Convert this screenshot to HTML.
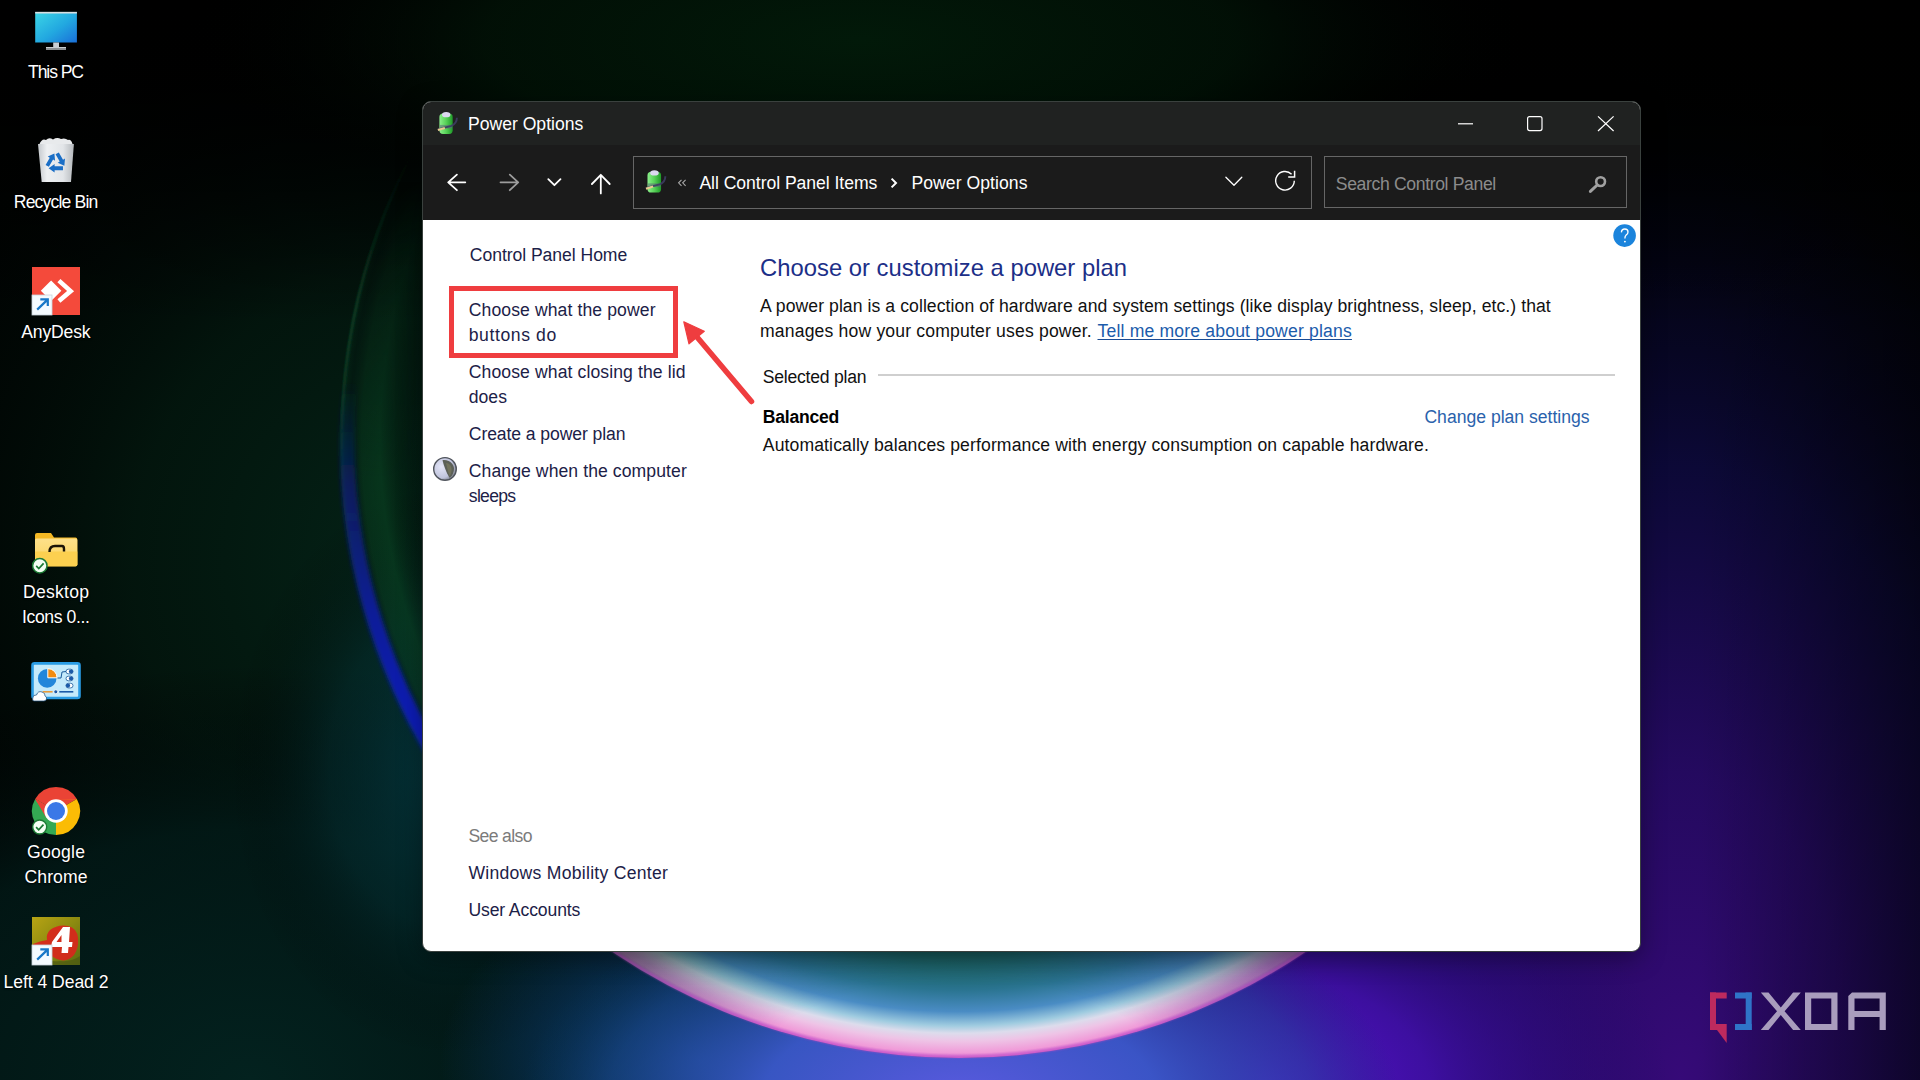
<!DOCTYPE html>
<html><head><meta charset="utf-8">
<style>
*{margin:0;padding:0;box-sizing:border-box}
html,body{width:1920px;height:1080px;overflow:hidden;background:#000}
body{position:relative;font-family:"Liberation Sans",sans-serif}
.abs{position:absolute}
.t{position:absolute;white-space:nowrap}
svg{position:absolute;overflow:visible}
</style></head><body>
<svg width="1920" height="1080" style="left:0;top:0" viewBox="0 0 1920 1080">
<defs>
 <linearGradient id="gTopBlack" x1="0" y1="0" x2="0" y2="1">
  <stop offset="0" stop-color="#000" stop-opacity="1"/>
  <stop offset="0.08" stop-color="#000" stop-opacity="0.9"/>
  <stop offset="0.3" stop-color="#000" stop-opacity="0"/>
 </linearGradient>
 <radialGradient id="gGreen" gradientUnits="userSpaceOnUse" cx="440" cy="560" r="620" gradientTransform="translate(440 560) scale(1 0.95) translate(-440 -560)">
  <stop offset="0" stop-color="#042418" stop-opacity="1"/>
  <stop offset="0.5" stop-color="#03180f" stop-opacity="0.85"/>
  <stop offset="1" stop-color="#010806" stop-opacity="0"/>
 </radialGradient>
 <radialGradient id="gTeal" gradientUnits="userSpaceOnUse" cx="450" cy="770" r="260" gradientTransform="translate(450 770) scale(0.85 1.1) translate(-450 -770)">
  <stop offset="0" stop-color="#05404c" stop-opacity="0.75"/>
  <stop offset="0.55" stop-color="#043036" stop-opacity="0.45"/>
  <stop offset="1" stop-color="#000" stop-opacity="0"/>
 </radialGradient>
 <radialGradient id="gRight" gradientUnits="userSpaceOnUse" cx="1680" cy="1080" r="820" gradientTransform="translate(1680 1080) scale(0.7 1.25) translate(-1680 -1080)">
  <stop offset="0" stop-color="#360a78" stop-opacity="1"/>
  <stop offset="0.3" stop-color="#260a64" stop-opacity="0.95"/>
  <stop offset="0.6" stop-color="#0e0a40" stop-opacity="0.85"/>
  <stop offset="0.85" stop-color="#040418" stop-opacity="0.6"/>
  <stop offset="1" stop-color="#000" stop-opacity="0"/>
 </radialGradient>
 <linearGradient id="gRightDark" gradientUnits="userSpaceOnUse" x1="1700" y1="0" x2="1920" y2="0">
  <stop offset="0" stop-color="#000" stop-opacity="0"/>
  <stop offset="1" stop-color="#000" stop-opacity="0.45"/>
 </linearGradient>
 <radialGradient id="gPurple" gradientUnits="userSpaceOnUse" cx="1270" cy="1090" r="400" gradientTransform="translate(1270 1090) scale(1 0.7) translate(-1270 -1090)">
  <stop offset="0" stop-color="#5c12d8" stop-opacity="1"/>
  <stop offset="0.4" stop-color="#4410b0" stop-opacity="0.85"/>
  <stop offset="1" stop-color="#240870" stop-opacity="0"/>
 </radialGradient>
 <radialGradient id="gBlue" gradientUnits="userSpaceOnUse" cx="960" cy="1100" r="440" gradientTransform="translate(960 1100) scale(1 0.5) translate(-960 -1100)">
  <stop offset="0" stop-color="#5a5ae0" stop-opacity="1"/>
  <stop offset="0.45" stop-color="#3a58c8" stop-opacity="0.95"/>
  <stop offset="0.8" stop-color="#1a4a90" stop-opacity="0.5"/>
  <stop offset="1" stop-color="#063a60" stop-opacity="0"/>
 </radialGradient>
 <radialGradient id="gBlueL" gradientUnits="userSpaceOnUse" cx="700" cy="1060" r="260" gradientTransform="translate(700 1060) scale(1 0.7) translate(-700 -1060)">
  <stop offset="0" stop-color="#1a4a9a" stop-opacity="0.8"/>
  <stop offset="0.6" stop-color="#0c3a70" stop-opacity="0.5"/>
  <stop offset="1" stop-color="#0a3a70" stop-opacity="0"/>
 </radialGradient>
 <radialGradient id="gBL" gradientUnits="userSpaceOnUse" cx="250" cy="1080" r="520" gradientTransform="translate(250 1080) scale(1.2 0.8) translate(-250 -1080)">
  <stop offset="0" stop-color="#03221f" stop-opacity="1"/>
  <stop offset="0.6" stop-color="#021a18" stop-opacity="0.8"/>
  <stop offset="1" stop-color="#000" stop-opacity="0"/>
 </radialGradient>
 <radialGradient id="gRing" gradientUnits="userSpaceOnUse" cx="959" cy="439" r="619">
  <stop offset="0" stop-color="#000" stop-opacity="0"/>
  <stop offset="0.78" stop-color="#0a4030" stop-opacity="0"/>
  <stop offset="0.83" stop-color="#145e4a" stop-opacity="0.9"/>
  <stop offset="0.89" stop-color="#2a7490" stop-opacity="1"/>
  <stop offset="0.925" stop-color="#4a8cc4" stop-opacity="1"/>
  <stop offset="0.948" stop-color="#a0cce0" stop-opacity="1"/>
  <stop offset="0.960" stop-color="#dcdcec" stop-opacity="1"/>
  <stop offset="0.973" stop-color="#eec4e6" stop-opacity="1"/>
  <stop offset="0.992" stop-color="#f09ad8" stop-opacity="1"/>
  <stop offset="1" stop-color="#c860cc" stop-opacity="1"/>
 </radialGradient>
 <linearGradient id="mFade" gradientUnits="userSpaceOnUse" x1="0" y1="820" x2="0" y2="960">
  <stop offset="0" stop-color="#fff" stop-opacity="0"/>
  <stop offset="1" stop-color="#fff" stop-opacity="1"/>
 </linearGradient>
 <mask id="mBottom" maskUnits="userSpaceOnUse" x="0" y="0" width="1920" height="1080">
  <rect x="0" y="0" width="1920" height="1080" fill="url(#mFade)"/>
 </mask>
 <linearGradient id="lBlueLine" gradientUnits="userSpaceOnUse" x1="0" y1="380" x2="0" y2="900">
  <stop offset="0" stop-color="#0a2a50" stop-opacity="0"/>
  <stop offset="0.2" stop-color="#0c1e78" stop-opacity="0.7"/>
  <stop offset="0.45" stop-color="#0a1c98" stop-opacity="1"/>
  <stop offset="0.72" stop-color="#0e20c0" stop-opacity="1"/>
  <stop offset="1" stop-color="#0e20c0" stop-opacity="0"/>
 </linearGradient>
 <linearGradient id="lGreenLine" gradientUnits="userSpaceOnUse" x1="0" y1="150" x2="0" y2="560">
  <stop offset="0" stop-color="#0e3a24" stop-opacity="0"/>
  <stop offset="0.4" stop-color="#124a2c" stop-opacity="0.7"/>
  <stop offset="1" stop-color="#124a2c" stop-opacity="0"/>
 </linearGradient>
 <radialGradient id="gRingL" gradientUnits="userSpaceOnUse" cx="959" cy="439" r="619">
  <stop offset="0.86" stop-color="#000" stop-opacity="0"/>
  <stop offset="0.935" stop-color="#0a4422" stop-opacity="0.6"/>
  <stop offset="0.965" stop-color="#0a4020" stop-opacity="0.5"/>
  <stop offset="0.985" stop-color="#051a14" stop-opacity="0.3"/>
  <stop offset="1" stop-color="#0e5a2e" stop-opacity="0.3"/>
 </radialGradient>
 <linearGradient id="mTopF" gradientUnits="userSpaceOnUse" x1="0" y1="180" x2="0" y2="480">
  <stop offset="0" stop-color="#fff" stop-opacity="0"/>
  <stop offset="1" stop-color="#fff" stop-opacity="1"/>
 </linearGradient>
 <mask id="mTop" maskUnits="userSpaceOnUse" x="0" y="0" width="1920" height="1080"><rect x="0" y="0" width="1920" height="1080" fill="url(#mTopF)"/></mask>
 <radialGradient id="mHorizG" gradientUnits="userSpaceOnUse" cx="959" cy="1090" r="400" gradientTransform="translate(959 1090) scale(1 0.5) translate(-959 -1090)">
  <stop offset="0" stop-color="#fff" stop-opacity="1"/>
  <stop offset="0.55" stop-color="#fff" stop-opacity="1"/>
  <stop offset="1" stop-color="#fff" stop-opacity="0.55"/>
 </radialGradient>
 <mask id="mHoriz" maskUnits="userSpaceOnUse" x="0" y="0" width="1920" height="1080"><rect x="0" y="0" width="1920" height="1080" fill="url(#mHorizG)"/></mask>
 <radialGradient id="gTopGreen" gradientUnits="userSpaceOnUse" cx="860" cy="40" r="680" gradientTransform="translate(860 40) scale(1 0.3) translate(-860 -40)">
  <stop offset="0" stop-color="#021c0a" stop-opacity="0.9"/>
  <stop offset="0.55" stop-color="#021608" stop-opacity="0.7"/>
  <stop offset="1" stop-color="#000" stop-opacity="0"/>
 </radialGradient>
 <filter id="b2" x="-10%" y="-10%" width="120%" height="120%"><feGaussianBlur stdDeviation="2"/></filter>
 <filter id="b1" x="-10%" y="-10%" width="120%" height="120%"><feGaussianBlur stdDeviation="0.8"/></filter>
</defs>
<rect x="0" y="0" width="1920" height="1080" fill="#000201"/>
<rect x="0" y="0" width="1920" height="1080" fill="url(#gGreen)"/>
<rect x="0" y="0" width="1920" height="1080" fill="url(#gBL)"/>
<rect x="0" y="0" width="1920" height="1080" fill="url(#gTeal)"/>
<rect x="0" y="0" width="1920" height="1080" fill="url(#gRight)"/>
<rect x="1640" y="0" width="280" height="1080" fill="url(#gRightDark)"/>
<rect x="0" y="0" width="1920" height="1080" fill="url(#gTopBlack)"/>
<rect x="0" y="0" width="1920" height="1080" fill="url(#gTopGreen)"/>
<rect x="0" y="0" width="1920" height="1080" fill="url(#gBlueL)"/>
<rect x="0" y="0" width="1920" height="1080" fill="url(#gPurple)"/>
<rect x="0" y="0" width="1920" height="1080" fill="url(#gBlue)"/>
<g mask="url(#mTop)">
 <circle cx="959" cy="439" r="619" fill="url(#gRingL)"/>
</g>
<circle cx="959" cy="439" r="617" fill="none" stroke="url(#lGreenLine)" stroke-width="2.5" filter="url(#b1)"/>
<circle cx="959" cy="439" r="612" fill="none" stroke="url(#lBlueLine)" stroke-width="15" filter="url(#b2)"/>
<g mask="url(#mBottom)">
 <circle cx="959" cy="439" r="619" fill="#0a3a38" opacity="0.0"/>
 <g mask="url(#mHoriz)">
  <circle cx="959" cy="439" r="619" fill="url(#gRing)"/>
 </g>
 <circle cx="959" cy="439" r="617.8" fill="none" stroke="#c848c8" stroke-width="2.2" opacity="0.55" filter="url(#b1)"/>
</g>
</svg>

<svg width="1920" height="1080" style="left:0;top:0">
<defs>
 <linearGradient id="pcScr" x1="0" y1="0" x2="1" y2="1">
  <stop offset="0" stop-color="#3cd6e6"/><stop offset="0.55" stop-color="#22a8e0"/><stop offset="1" stop-color="#1a6fd8"/>
 </linearGradient>
 <linearGradient id="binG" x1="0" y1="0" x2="1" y2="0">
  <stop offset="0" stop-color="#c4c8cc"/><stop offset="0.25" stop-color="#eef0f2"/><stop offset="0.7" stop-color="#e2e5e8"/><stop offset="1" stop-color="#b4b8bc"/>
 </linearGradient>
 <linearGradient id="fldB" x1="0" y1="0" x2="0" y2="1">
  <stop offset="0" stop-color="#fde08a"/><stop offset="1" stop-color="#fbd45a"/>
 </linearGradient>
 <linearGradient id="l4d" x1="0" y1="0" x2="1" y2="1">
  <stop offset="0" stop-color="#b8a414"/><stop offset="0.5" stop-color="#8c8a10"/><stop offset="1" stop-color="#5a6a10"/>
 </linearGradient>
 <radialGradient id="l4dRed" cx="0.6" cy="0.55" r="0.45">
  <stop offset="0" stop-color="#e8261e"/><stop offset="0.75" stop-color="#d42018"/><stop offset="1" stop-color="#c02018" stop-opacity="0"/>
 </radialGradient>
</defs>
<!-- This PC -->
<rect x="35.2" y="11.9" width="41.7" height="30.6" fill="url(#pcScr)"/>
<rect x="35.2" y="11.9" width="41.7" height="1.6" fill="#d8dde0"/>
<rect x="53.2" y="42.5" width="5.8" height="4.6" fill="#c9cdd2"/>
<rect x="46" y="47" width="20" height="3" fill="#8c8f92"/>
<rect x="46" y="47" width="20" height="1" fill="#c8ccd0"/>
<!-- Recycle bin -->
<path d="M38 143.9 L73.9 143.9 L71 182 L41.7 182 Z" fill="url(#binG)"/>
<path d="M39.5 144 Q42 138 46 140 Q49 137 53 139.5 Q57 137 61 139 Q65 137.5 68 140 Q71 139 72.5 144 Z" fill="#e8eaec"/>
<g fill="#1a6ec6" transform="translate(55.8 162.5)"><path d="M-10.21 2.38 L-6.92 4.29 L-2.74 -2.96 L-0.74 -1.81 L-1.39 -9.08 L-8.02 -6.01 L-6.03 -4.86 Z M3.04 -10.04 L-0.25 -8.14 L3.93 -0.89 L1.94 0.26 L8.56 3.33 L9.21 -3.94 L7.22 -2.79 Z M7.17 7.65 L7.17 3.85 L-1.20 3.85 L-1.20 1.55 L-7.17 5.75 L-1.20 9.95 L-1.20 7.65 Z"/></g>
<!-- AnyDesk -->
<rect x="32" y="267" width="48" height="48" fill="#f44a3b"/>
<path d="M51.1 280.5 L61.4 290.8 L51.1 301.1 L40.8 290.8 Z" fill="#fff"/>
<path d="M58.9 280.6 L70.6 291.1 L58.9 301.1" fill="none" stroke="#fff" stroke-width="4.6"/>
<!-- Desktop Icons folder -->
<path d="M35 535 Q35 533 37 533 L51 533 L54 537.5 L75.5 537.5 Q77.3 537.5 77.3 539.5 L77.3 564.5 Q77.3 566.2 75.5 566.2 L37 566.2 Q35 566.2 35 564.5 Z" fill="#f4b824"/>
<rect x="35" y="538.5" width="42.3" height="27.7" rx="1.5" fill="url(#fldB)"/>
<path d="M35 551.5 L77.3 551.5 L77.3 564.5 Q77.3 566.2 75.5 566.2 L37 566.2 Q35 566.2 35 564.5 Z" fill="#fcd050"/>
<path d="M49.5 552 Q49.5 546 55 546 L62 546 Q64 546 64 549 L64 551.5" fill="none" stroke="#1a1408" stroke-width="2.4"/>
<!-- Control panel icon -->
<rect x="32.5" y="663.4" width="47" height="34.6" rx="2" fill="#c4eafb" stroke="#2a9ce4" stroke-width="2.6"/>
<circle cx="47.2" cy="678.4" r="9.3" fill="#2286da"/>
<path d="M47.8 668.6 A9.3 9.3 0 0 1 57.1 677.8 L47.8 677.8 Z" fill="#f28c12" stroke="#fff" stroke-width="1"/>
<path d="M57.5 678 L61 678 L62 672 L66 671.5" fill="none" stroke="#1a5a9a" stroke-width="1"/>
<rect x="66" y="669.2" width="7" height="4.6" rx="2.3" fill="#fff" stroke="#1a5a9a" stroke-width="0.8"/><circle cx="71" cy="671.5" r="2.1" fill="#1a5aa8"/>
<rect x="66" y="676.2" width="7" height="4.6" rx="2.3" fill="#fff" stroke="#1a5a9a" stroke-width="0.8"/><circle cx="71" cy="678.5" r="2.1" fill="#1a5aa8"/>
<rect x="66" y="683.3" width="7" height="4.6" rx="2.3" fill="#fff" stroke="#1a5a9a" stroke-width="0.8"/><circle cx="68" cy="685.6" r="2.1" fill="#1a5aa8"/>
<rect x="42.6" y="691" width="10" height="1.6" fill="#e89a3a"/>
<circle cx="55.8" cy="691.8" r="2" fill="#1a5aa8" stroke="#fff" stroke-width="0.8"/>
<rect x="59.3" y="691" width="14" height="1.6" fill="#1a5aa8"/>
<path d="M34 701 Q32 701 32.8 698 Q33 694.5 36.5 695 Q38 690.5 42 692 Q45.5 693 45 696 Q47 696.5 46.5 699 Q46 701 44 701 Z" fill="#fff" stroke="#1a4a7a" stroke-width="0.7"/>
<!-- Chrome -->
<g transform="translate(56 811)">
 <path d="M0 0 L-20.8 -12 A24 24 0 0 1 20.8 -12 Z" fill="#ea4335"/>
 <path d="M0 0 L20.8 -12 A24 24 0 0 1 0 24 Z" fill="#fbbc05"/>
 <path d="M0 0 L0 24 A24 24 0 0 1 -20.8 -12 Z" fill="#34a853"/>
 <path d="M0 -11.7 L20.8 -11.7 A24 24 0 0 1 20.8 -12 Z" fill="#fbbc05"/>
 <path d="M-10.1 5.85 L-20.8 -12 L0 0 Z" fill="#ea4335"/>
 <path d="M10.1 5.85 L0 24 L0 0 Z" fill="#fbbc05"/>
 <path d="M-20.8 -12 L-10.1 5.85 L0 0 Z" fill="#ea4335"/>
 <circle r="11.7" fill="#fff"/>
 <circle r="9" fill="#3b78e7"/>
</g>
<!-- L4D2 -->
<rect x="32" y="917" width="48" height="48" fill="url(#l4d)"/>
<path d="M50 930 Q58 924 68 926 Q77 928 78 938 Q79 948 74 955 Q68 962 60 960 Q52 958 48 952 Q40 951 34 950 L33 944 Q40 941 47 940 Q46 934 50 930 Z" fill="#d8261c" opacity="0.92"/>
<path d="M33 958 Q50 962 60 961 Q72 962 80 956 L80 965 L32 965 Z" fill="#4c5a12" opacity="0.7"/>
<path d="M63 927 L70 927 L69 942 L72.5 942 L72 947 L68.5 947 L68 953 L61.5 953 L62 947 L51 947 L52 942 Z M61.5 935 L56.5 942 L61.5 942 Z" fill="#fff" fill-rule="evenodd"/>
<!-- shortcut overlays -->
<g id="sc1">
 <rect x="32" y="295" width="20" height="20" fill="#f4fbff" stroke="#c8d4dc" stroke-width="0.8"/>
 <path d="M37.2 309.6 L47.6 299.6 M40.3 299.4 L47.8 299.4 L47.8 306" fill="none" stroke="#1878c8" stroke-width="2.2"/>
</g>
<g transform="translate(0 650)">
 <rect x="32" y="295" width="20" height="20" fill="#f4fbff" stroke="#c8d4dc" stroke-width="0.8"/>
 <path d="M37.2 309.6 L47.6 299.6 M40.3 299.4 L47.8 299.4 L47.8 306" fill="none" stroke="#1878c8" stroke-width="2.2"/>
</g>
<!-- sync check badges -->
<g transform="translate(39.8 565.7)">
 <circle r="7.2" fill="#f4fff4" stroke="#1c7a34" stroke-width="1.5"/>
 <path d="M-3.6 0.2 L-1 2.8 L3.8 -2.4" fill="none" stroke="#1c7a34" stroke-width="1.7"/>
</g>
<g transform="translate(39.7 827)">
 <circle r="7" fill="#f4fff4" stroke="#1c7a34" stroke-width="1.4"/>
 <path d="M-3.6 0.2 L-1 2.8 L3.8 -2.4" fill="none" stroke="#1c7a34" stroke-width="1.7"/>
</g>
</svg>

<div class="t" style="left:28.0px;top:60.30px;font-size:17.6px;line-height:25px;color:#fff;letter-spacing:-1.098px;text-shadow:0 1px 2px rgba(0,0,0,.9),0 0 1px rgba(0,0,0,.9)">This PC</div>
<div class="t" style="left:13.8px;top:190.30px;font-size:17.6px;line-height:25px;color:#fff;letter-spacing:-0.842px;text-shadow:0 1px 2px rgba(0,0,0,.9),0 0 1px rgba(0,0,0,.9)">Recycle Bin</div>
<div class="t" style="left:21.2px;top:320.30px;font-size:17.6px;line-height:25px;color:#fff;letter-spacing:-0.154px;text-shadow:0 1px 2px rgba(0,0,0,.9),0 0 1px rgba(0,0,0,.9)">AnyDesk</div>
<div class="t" style="left:22.9px;top:580.30px;font-size:17.6px;line-height:25px;color:#fff;letter-spacing:0.281px;text-shadow:0 1px 2px rgba(0,0,0,.9),0 0 1px rgba(0,0,0,.9)">Desktop</div>
<div class="t" style="left:22.1px;top:604.80px;font-size:17.6px;line-height:25px;color:#fff;letter-spacing:-0.407px;text-shadow:0 1px 2px rgba(0,0,0,.9),0 0 1px rgba(0,0,0,.9)">Icons 0...</div>
<div class="t" style="left:27.0px;top:840.30px;font-size:17.6px;line-height:25px;color:#fff;letter-spacing:0.250px;text-shadow:0 1px 2px rgba(0,0,0,.9),0 0 1px rgba(0,0,0,.9)">Google</div>
<div class="t" style="left:24.5px;top:864.80px;font-size:17.6px;line-height:25px;color:#fff;letter-spacing:0.081px;text-shadow:0 1px 2px rgba(0,0,0,.9),0 0 1px rgba(0,0,0,.9)">Chrome</div>
<div class="t" style="left:3.5px;top:970.30px;font-size:17.6px;line-height:25px;color:#fff;letter-spacing:-0.056px;text-shadow:0 1px 2px rgba(0,0,0,.9),0 0 1px rgba(0,0,0,.9)">Left 4 Dead 2</div>
<div class="abs" style="left:422.2px;top:101px;width:1219.3px;height:851px;border-radius:9px;border:1.4px solid #3a413e;overflow:hidden;background:#fff;box-shadow:0 6px 24px rgba(0,0,0,.35)">
 <div class="abs" style="left:0;top:0;width:1217px;height:42.5px;background:#202221"></div>
 <div class="abs" style="left:0;top:42.5px;width:1217px;height:75.1px;background:#1b1b1b"></div>
</div>
<div class="abs" style="left:632.5px;top:156px;width:679.5px;height:52.5px;border:1px solid #666"></div>
<div class="abs" style="left:1324.2px;top:156.3px;width:303.3px;height:52px;border:1px solid #666"></div>
<svg width="1920" height="1080" style="left:0;top:0">
<defs>
 <linearGradient id="batG" x1="0" y1="0" x2="1" y2="0">
  <stop offset="0" stop-color="#8cf08c"/><stop offset="0.5" stop-color="#58d258"/><stop offset="1" stop-color="#1e9a28"/>
 </linearGradient>
 <radialGradient id="moonG" cx="0.35" cy="0.4" r="0.7">
  <stop offset="0" stop-color="#e4e6f8"/><stop offset="0.7" stop-color="#c0c4dc"/><stop offset="1" stop-color="#70747e"/>
 </radialGradient>
</defs>
<!-- title battery -->
<g transform="translate(439.4 111.3)">
 <rect x="0" y="2.2" width="13.3" height="20.4" rx="3.6" fill="url(#batG)"/>
 <ellipse cx="6.8" cy="3.4" rx="4.2" ry="2.6" fill="#dcd8f0"/>
 <rect x="0.5" y="13.6" width="12.3" height="3.6" fill="#5a6a78" opacity="0.55"/>
 <path d="M-1.5 18.2 Q5 16.2 12 14.6 Q17.5 12 17.5 6.5" fill="none" stroke="#3e3c64" stroke-width="1.9" opacity="0.9"/>
 <path d="M-1.5 18.8 L5.5 16.6" stroke="#e8cc90" stroke-width="2.1"/>
</g>
<!-- window controls -->
<rect x="1458" y="123.2" width="15" height="1.2" fill="#fff"/>
<rect x="1527.6" y="116.6" width="14.4" height="14" rx="2" fill="none" stroke="#fff" stroke-width="1.2"/>
<path d="M1598 116.4 L1613.6 131 M1613.6 116.4 L1598 131" stroke="#fff" stroke-width="1.25"/>
<!-- nav -->
<path d="M465.3 182.3 L448.2 182.3 M456.9 174.6 L448.2 182.3 L456.9 190.2" fill="none" stroke="#fff" stroke-width="1.8" stroke-linecap="round" stroke-linejoin="round"/>
<path d="M500.5 182.3 L518.2 182.3 M509.8 174.6 L518.2 182.3 L509.8 190.2" fill="none" stroke="#9d9d9d" stroke-width="1.8" stroke-linecap="round" stroke-linejoin="round"/>
<path d="M548.3 179.2 L554.4 185.2 L560.5 179.2" fill="none" stroke="#fff" stroke-width="1.8" stroke-linecap="round" stroke-linejoin="round"/>
<path d="M600.8 193.4 L600.8 174.8 M591.9 184 L600.8 174.8 L609.7 184" fill="none" stroke="#fff" stroke-width="1.8" stroke-linecap="round" stroke-linejoin="round"/>
<!-- address battery -->
<g transform="translate(647.5 169.5) scale(1.02)">
 <rect x="0" y="2.2" width="13.3" height="20.4" rx="3.6" fill="url(#batG)"/>
 <ellipse cx="6.8" cy="3.4" rx="4.2" ry="2.6" fill="#dcd8f0"/>
 <rect x="0.5" y="13.6" width="12.3" height="3.6" fill="#5a6a78" opacity="0.55"/>
 <path d="M-1.5 18.2 Q5 16.2 12 14.6 Q17.5 12 17.5 6.5" fill="none" stroke="#3e3c64" stroke-width="1.9" opacity="0.9"/>
 <path d="M-1.5 18.8 L5.5 16.6" stroke="#e8cc90" stroke-width="2.1"/>
</g>
<path d="M681.5 179.8 L678.6 182.8 L681.5 185.8 M685.6 179.8 L682.7 182.8 L685.6 185.8" fill="none" stroke="#a8a8a8" stroke-width="1.1"/>
<path d="M891.6 178.6 L896 183 L891.6 187.4" fill="none" stroke="#fff" stroke-width="2"/>
<path d="M1225.9 177.2 L1234 185.3 L1241.8 177.2" fill="none" stroke="#fff" stroke-width="1.3" stroke-linecap="round" stroke-linejoin="round"/>
<path d="M1294.3 180.8 A9.3 9.3 0 1 1 1291.6 174.2" fill="none" stroke="#fff" stroke-width="1.4"/>
<path d="M1288.2 177 L1294.6 177 L1294.6 170.8" fill="none" stroke="#fff" stroke-width="1.5"/>
<!-- search icon -->
<circle cx="1600.6" cy="181.6" r="4.4" fill="none" stroke="#a0a0a0" stroke-width="2.6"/>
<path d="M1597.2 185 L1590.4 191.4" stroke="#a0a0a0" stroke-width="3" stroke-linecap="round"/>
<!-- help -->
<circle cx="1624.6" cy="235.6" r="11.3" fill="#1b84dc"/>
<path d="M1621.4 232.4 Q1621.6 229 1624.8 229 Q1628 229 1628 232 Q1628 234 1626 235.2 Q1624.9 236 1624.9 238.6" fill="none" stroke="#fff" stroke-width="1.35"/>
<circle cx="1624.9" cy="241.6" r="0.95" fill="#fff"/>
<!-- moon -->
<circle cx="445" cy="468.9" r="11.3" fill="url(#moonG)"/>
<path d="M442.5 460.2 C450 459.2, 455.2 465, 453.8 471 C452.8 475, 451.2 477.2, 449.5 477.8 C446 472, 444 466, 442.5 460.2 Z" fill="#5c6058"/>
<path d="M446 463 C450 463, 452 467, 451.5 471 C451 474, 450 475.5, 449.5 476 C448 471, 447 467, 446 463 Z" fill="#7a7a5e" opacity="0.7"/>
<circle cx="445" cy="468.9" r="11.3" fill="none" stroke="#50545c" stroke-width="1.4"/>
</svg>

<div class="t" style="left:468.0px;top:112.10px;font-size:17.6px;line-height:25px;color:#fff;letter-spacing:-0.010px;">Power Options</div>
<div class="t" style="left:699.4px;top:170.80px;font-size:17.6px;line-height:25px;color:#fff;letter-spacing:-0.045px;">All Control Panel Items</div>
<div class="t" style="left:911.5px;top:170.80px;font-size:17.6px;line-height:25px;color:#fff;letter-spacing:0.048px;">Power Options</div>
<div class="t" style="left:1335.8px;top:171.80px;font-size:17.6px;line-height:25px;color:#8c8c8c;letter-spacing:-0.357px;">Search Control Panel</div>
<div class="t" style="left:469.8px;top:243.20px;font-size:17.6px;line-height:25px;color:#1c2147;letter-spacing:-0.057px;">Control Panel Home</div>
<div class="t" style="left:468.7px;top:298.20px;font-size:17.6px;line-height:25px;color:#1c2147;letter-spacing:0.100px;">Choose what the power</div>
<div class="t" style="left:468.7px;top:322.90px;font-size:17.6px;line-height:25px;color:#1c2147;letter-spacing:0.590px;">buttons do</div>
<div class="t" style="left:468.8px;top:360.00px;font-size:17.6px;line-height:25px;color:#1c2147;letter-spacing:0.094px;">Choose what closing the lid</div>
<div class="t" style="left:468.8px;top:384.70px;font-size:17.6px;line-height:25px;color:#1c2147;letter-spacing:0.000px;">does</div>
<div class="t" style="left:468.8px;top:422.00px;font-size:17.6px;line-height:25px;color:#1c2147;letter-spacing:-0.099px;">Create a power plan</div>
<div class="t" style="left:468.8px;top:459.00px;font-size:17.6px;line-height:25px;color:#1c2147;letter-spacing:0.078px;">Change when the computer</div>
<div class="t" style="left:468.8px;top:483.70px;font-size:17.6px;line-height:25px;color:#1c2147;letter-spacing:-0.714px;">sleeps</div>
<div class="t" style="left:468.4px;top:823.90px;font-size:17.6px;line-height:25px;color:#7b7b7b;letter-spacing:-0.627px;">See also</div>
<div class="t" style="left:468.4px;top:861.10px;font-size:17.6px;line-height:25px;color:#1c2147;letter-spacing:0.266px;">Windows Mobility Center</div>
<div class="t" style="left:468.4px;top:897.60px;font-size:17.6px;line-height:25px;color:#1c2147;letter-spacing:-0.122px;">User Accounts</div>
<div class="t" style="left:760.0px;top:250.75px;font-size:23.8px;line-height:33px;color:#1c2f88;letter-spacing:0.019px;">Choose or customize a power plan</div>
<div class="t" style="left:760.0px;top:294.30px;font-size:17.6px;line-height:25px;color:#111;letter-spacing:0.072px;">A power plan is a collection of hardware and system settings (like display brightness, sleep, etc.) that</div>
<div class="t" style="left:760.0px;top:319.30px;font-size:17.6px;line-height:25px;color:#111;letter-spacing:0.165px;">manages how your computer uses power.</div>
<div class="t" style="left:1097.5px;top:319.30px;font-size:17.6px;line-height:25px;color:#1c5cab;letter-spacing:0.168px;text-decoration:underline;text-decoration-color:#1a4c94;text-decoration-skip-ink:none;text-underline-offset:2px">Tell me more about power plans</div>
<div class="t" style="left:762.8px;top:364.80px;font-size:17.6px;line-height:25px;color:#111;letter-spacing:-0.246px;">Selected plan</div>
<div class="abs" style="left:878px;top:374px;width:737px;height:2px;background:#cfcfcf"></div>
<div class="t" style="left:762.8px;top:404.90px;font-size:17.6px;line-height:25px;color:#000;letter-spacing:-0.236px;font-weight:700;">Balanced</div>
<div class="t" style="left:1424.4px;top:404.90px;font-size:17.6px;line-height:25px;color:#2a62ac;letter-spacing:-0.003px;">Change plan settings</div>
<div class="t" style="left:762.8px;top:433.10px;font-size:17.6px;line-height:25px;color:#111;letter-spacing:0.113px;">Automatically balances performance with energy consumption on capable hardware.</div>
<div class="abs" style="left:449.2px;top:286.1px;width:228.4px;height:71.8px;border:5px solid #ef3d3f"></div>
<svg width="1920" height="1080" style="left:0;top:0">
 <line x1="697" y1="337" x2="751.5" y2="401.5" stroke="#ef3d3f" stroke-width="5.5" stroke-linecap="round"/>
 <polygon points="683.8,321.8 704.3,331.2 689,343.8" fill="#ef3d3f" stroke="#ef3d3f" stroke-width="1.2" stroke-linejoin="round"/>
</svg>
<svg width="1920" height="1080" style="left:0;top:0">
 <g fill="#bd2a5e">
  <rect x="1710" y="992.5" width="16.7" height="6"/>
  <rect x="1710" y="992.5" width="6" height="37.5"/>
  <rect x="1710" y="1024" width="16.7" height="6"/>
  <polygon points="1717,1030 1726.7,1030 1726.7,1043"/>
 </g>
 <g fill="#2f74c8">
  <rect x="1735" y="992.5" width="16.7" height="6"/>
  <rect x="1745.7" y="992.5" width="6" height="37.5"/>
  <rect x="1735" y="1024" width="16.7" height="6"/>
 </g>
 <g fill="#a99dbd">
  <polygon points="1760.8,992.5 1768.5,992.5 1780.8,1007.5 1793.1,992.5 1800.8,992.5 1784.6,1011.2 1800.8,1030 1793.1,1030 1780.8,1015 1768.5,1030 1760.8,1030 1777,1011.2"/>
  <path d="M1805 992.5 L1837.5 992.5 L1837.5 1030 L1805 1030 Z M1811.2 998.5 L1811.2 1024 L1831.3 1024 L1831.3 998.5 Z" fill-rule="evenodd"/>
  <path d="M1852 992.5 L1885.8 992.5 L1885.8 1030 L1879.6 1030 L1879.6 1017 L1854.5 1017 L1854.5 1030 L1848.3 1030 L1848.3 996 Z M1854.5 998.5 L1854.5 1011 L1879.6 1011 L1879.6 998.5 Z" fill-rule="evenodd"/>
 </g>
</svg>

</body></html>
